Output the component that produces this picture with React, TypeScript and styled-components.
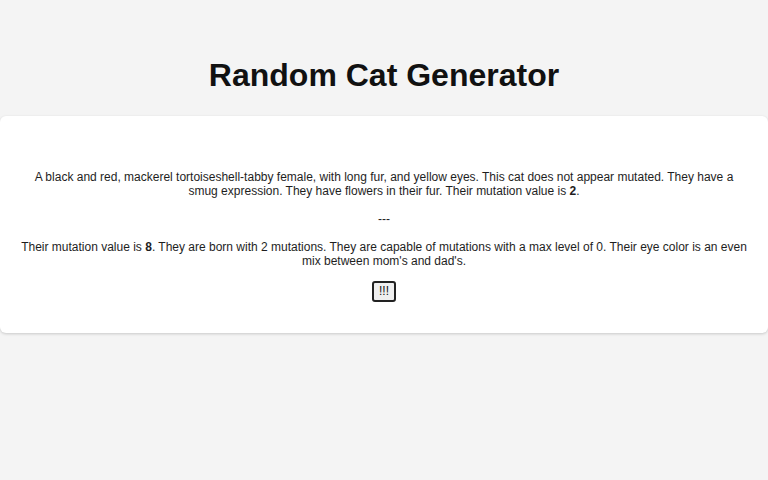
import React from "react";
import styled, { createGlobalStyle } from "styled-components";

const Global = createGlobalStyle`
  html, body {
    margin: 0;
    padding: 0;
    background: #f4f4f4;
  }
  body {
    font-family: "Liberation Sans", Arial, sans-serif;
    color: #222;
  }
`;

const Page = styled.main`
  display: flex;
  flex-direction: column;
  align-items: stretch;
  min-height: 480px;
`;

const Title = styled.h1`
  margin: 0;
  padding: 56px 0 22px;
  font-size: 32px;
  line-height: 38px;
  font-weight: 700;
  text-align: center;
  color: #111;
`;

const Card = styled.section`
  background: #fff;
  border-radius: 6px;
  box-shadow: 0 1px 3px rgba(0, 0, 0, 0.18);
  padding: 54px 20px 31px;
  display: flex;
  flex-direction: column;
  align-items: center;
  text-align: center;
`;

const Para = styled.p`
  margin: 0;
  font-size: 12px;
  line-height: 14px;
  color: #1e1e1e;
`;

const Divider = styled.p`
  margin: 14px 0;
  font-size: 12px;
  line-height: 14px;
  color: #1e1e1e;
`;

const Button = styled.button`
  margin-top: 13px;
  font-family: "Liberation Sans", Arial, sans-serif;
  font-size: 12px;
  line-height: 13px;
  padding: 2px 5px;
  background: #efefef;
  color: #111;
  border: 2px solid #222;
  border-radius: 3px;
  cursor: pointer;
`;

export default function App() {
  return (
    <>
      <Global />
      <Page>
        <Title>Random Cat Generator</Title>
        <Card>
          <Para>
            A black and red, mackerel tortoiseshell-tabby female, with long fur, and yellow eyes. This cat
            does not appear mutated. They have a smug expression. They have flowers in their fur. Their
            mutation value is <b>2</b>.
          </Para>
          <Divider>---</Divider>
          <Para>
            Their mutation value is <b>8</b>. They are born with 2 mutations. They are capable of mutations
            with a max level of 0. Their eye color is an even mix between mom's and dad's.
          </Para>
          <Button type="button">!!!</Button>
        </Card>
      </Page>
    </>
  );
}
